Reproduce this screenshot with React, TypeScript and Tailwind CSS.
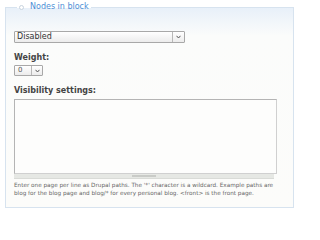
import React from 'react';

const Chevron: React.FC = () => (
    <svg width="5" height="4" viewBox="0 0 5 4" fill="none">
        <path d="M0.5 0.8 L2.5 3 L4.5 0.8" stroke="#555" strokeWidth="1" />
    </svg>
);

const App: React.FC = () => {
    return (
        <div className="w-[300px] h-[213px] bg-white pt-[1px] pl-[5px]" style={{ fontFamily: '"DejaVu Sans", Verdana, sans-serif' }}>
            <fieldset className="w-[289px] h-[207px] border border-[#d7e3ef] bg-gradient-to-b from-[#e8f0f9] via-[#fbfcfb] via-[14%] to-[#fcfcfa] px-[8px]">
                <legend className="ml-[3px] px-[2px] flex items-center h-[12px] gap-[6px]">
                    <span className="w-[5px] h-[5px] rounded-full border border-[#c8d3de] bg-white"></span>
                    <span className="text-[8px] leading-none text-[#4d8fd6]">Nodes in block</span>
                </legend>

                {/* mode select */}
                <div className="mt-[18px] flex w-[171px] h-[12px] border border-[#a8a8a8] bg-gradient-to-b from-white to-[#ececec] rounded-[1px]">
                    <span className="flex-1 text-[8px] leading-[10px] pl-[2px] text-[#333]">Disabled</span>
                    <span className="w-[12px] border-l border-[#b8b8b8] flex items-center justify-center">
                        <Chevron />
                    </span>
                </div>

                <div className="mt-[10px] text-[8px] leading-[10px] font-bold text-[#444]">Weight:</div>
                <div className="mt-[2px] flex w-[29px] h-[11px] border border-[#a8a8a8] bg-gradient-to-b from-white to-[#ececec] rounded-[1px]">
                    <span className="flex-1 text-[7px] leading-[9px] pl-[3px] text-[#555]">0</span>
                    <span className="w-[11px] border-l border-[#b8b8b8] flex items-center justify-center">
                        <Chevron />
                    </span>
                </div>

                <div className="mt-[10px] text-[8px] leading-[10px] font-bold text-[#444]">Visibility settings:</div>
                <div className="mt-[3px] w-[263px] h-[75px] border border-[#b4b4b4] border-r-[#d0d0d0] border-b-[#d0d0d0] bg-[#fdfdfc]"></div>
                <div className="w-[260px] h-[5px] bg-[#e6e8e4] border-b border-[#d9dbd7] flex justify-center">
                    <div className="mt-[1px] w-[24px] h-[2px] border-y border-[#c9cbc7]"></div>
                </div>
                <p className="mt-[2px] text-[5.7px] leading-[8px] text-[#666]">
                    Enter one page per line as Drupal paths. The '*' character is a wildcard. Example paths are blog for the blog page and blog/* for every personal blog. &lt;front&gt; is the front page.
                </p>
            </fieldset>
        </div>
    );
};

export default App;
